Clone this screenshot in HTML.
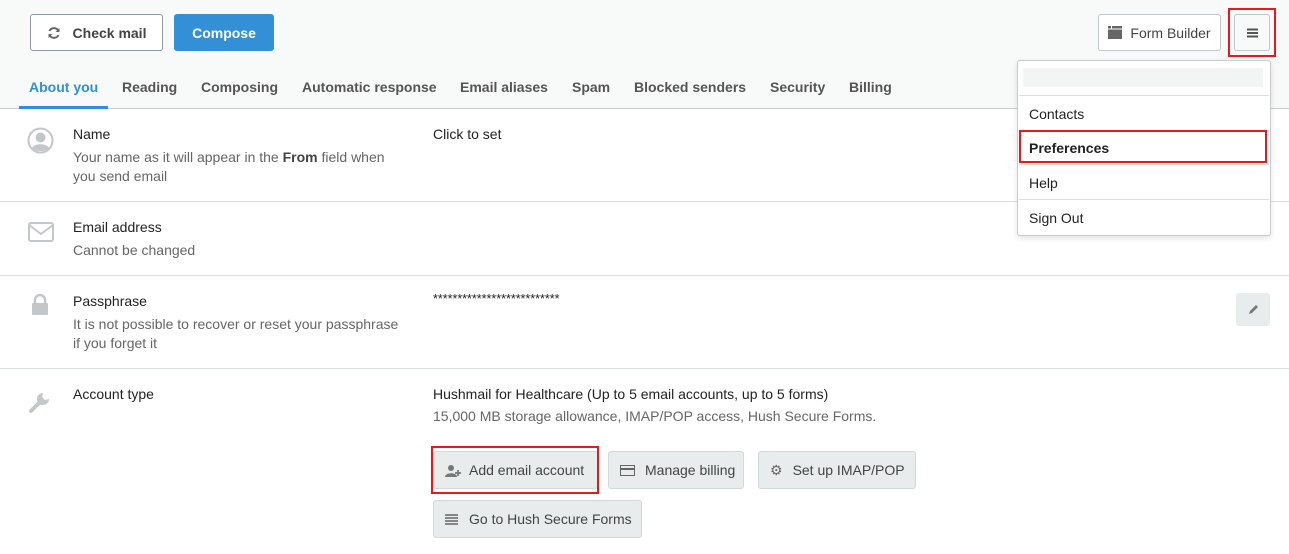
<!DOCTYPE html><html><head><style>
body{margin:0;width:1289px;height:554px;overflow:hidden;background:#fff;font-family:"Liberation Sans",sans-serif;position:relative;color:#222}
.a{position:absolute}
.hdr{left:0;top:0;width:1289px;height:108px;background:#f8f9f9;border-bottom:1px solid #c8cccd}
.btn{position:absolute;box-sizing:border-box;border-radius:3px;font-size:14px;display:flex;align-items:center;justify-content:center}
.tab{position:absolute;top:79px;font-size:14px;font-weight:bold;color:#555}
.sep{position:absolute;left:0;width:1289px;height:1px;background:#dcdfe0}
.lab{position:absolute;left:73px;font-size:14px;color:#222}
.sub{position:absolute;left:73px;font-size:14px;color:#666;line-height:19px}
.gb{background:#e8eced;border:1px solid #d2d8d9;color:#444;justify-content:flex-start;padding-left:11px}
.red{position:absolute;border:2px solid #e8191c;box-sizing:border-box}
.mi{position:absolute;left:1029px;font-size:14px;color:#222}
.ms{position:absolute;left:1019px;width:250px;height:1px;background:#dcdfe0}
</style></head><body>
<div class="a hdr"></div>
<div class="btn" style="left:30px;top:14px;width:133px;height:37px;border:1px solid #8a9a9d;background:#fff;font-weight:bold;color:#444"><svg width="14" height="14" viewBox="0 0 14 14" style="margin-right:12px"><path d="M11.5 5A5 5 0 0 0 2.5 5M2.5 9A5 5 0 0 0 11.5 9" fill="none" stroke="#666" stroke-width="2"/><path d="M12.5 2v4h-4zM1.5 12V8h4z" fill="#666"/></svg>Check mail</div>
<div class="btn" style="left:174px;top:14px;width:100px;height:37px;background:#3390d6;color:#fff;font-weight:bold">Compose</div>
<div class="btn" style="left:1098px;top:14px;width:123px;height:37px;border:1px solid #c2c8c9;background:#fff;color:#444"><svg width="14" height="13" style="margin-right:8px"><rect x="0" y="0" width="14" height="13" fill="#666"/><rect x="0" y="2.5" width="14" height="1" fill="#fff"/><rect x="3" y="0" width="1" height="2.5" fill="#fff"/></svg>Form Builder</div>
<div class="btn" style="left:1234px;top:14px;width:36px;height:37px;border:1px solid #c2c8c9;background:#f8f9f9"><svg width="11" height="10"><path d="M0 1.5h11M0 5h11M0 8.5h11" stroke="#555" stroke-width="2"/></svg></div>
<div class="red" style="left:1228px;top:8px;width:48px;height:49px"></div>
<div class="tab" style="left:29px;color:#2f8fd8">About you</div>
<div class="a" style="left:19px;top:106px;width:89px;height:3px;background:#2f8fd8"></div>
<div class="tab" style="left:122px">Reading</div>
<div class="tab" style="left:201px">Composing</div>
<div class="tab" style="left:302px">Automatic response</div>
<div class="tab" style="left:460px">Email aliases</div>
<div class="tab" style="left:572px">Spam</div>
<div class="tab" style="left:634px">Blocked senders</div>
<div class="tab" style="left:770px">Security</div>
<div class="tab" style="left:849px">Billing</div>

<svg class="a" style="left:27px;top:127px" width="27" height="27" viewBox="0 0 27 27"><circle cx="13.5" cy="13.5" r="12" fill="#fff" stroke="#c3c7c9" stroke-width="2"/><circle cx="13.5" cy="10.5" r="5" fill="#c3c7c9"/><path d="M5 21c2-5 15-5 17 0c-4 4-13 4-17 0z" fill="#c3c7c9"/></svg>
<div class="lab" style="top:126px">Name</div>
<div class="sub" style="top:148px">Your name as it will appear in the <b style="color:#444">From</b> field when<br>you send email</div>
<div class="a" style="left:433px;top:126px;font-size:14px">Click to set</div>
<div class="sep" style="top:201px"></div>

<svg class="a" style="left:28px;top:222px" width="26" height="20"><rect x="1" y="1" width="24" height="18" rx="2" fill="none" stroke="#c3c7c9" stroke-width="2"/><path d="M1 3l12 9 12-9" fill="none" stroke="#c3c7c9" stroke-width="2"/></svg>
<div class="lab" style="top:219px">Email address</div>
<div class="sub" style="top:241px">Cannot be changed</div>
<div class="sep" style="top:275px"></div>

<svg class="a" style="left:31px;top:294px" width="18" height="21"><path d="M4 9V6a5 5 0 0 1 10 0v3" fill="none" stroke="#c3c7c9" stroke-width="2.5"/><rect x="1" y="9" width="16" height="12" rx="1" fill="#c3c7c9"/></svg>
<div class="lab" style="top:293px">Passphrase</div>
<div class="sub" style="top:315px">It is not possible to recover or reset your passphrase<br>if you forget it</div>
<div class="a" style="left:433px;top:292px;font-size:12.5px">**************************</div>
<div class="btn" style="left:1236px;top:293px;width:34px;height:33px;background:#e8eced"><svg width="12" height="12"><path d="M2 10l1-3 6-6 2 2-6 6z" fill="#777"/></svg></div>
<div class="sep" style="top:368px"></div>

<svg class="a" style="left:28px;top:390px" width="24" height="24"><path d="M3 21l10-10" stroke="#c3c7c9" stroke-width="4" stroke-linecap="round"/><path d="M15 3a6 6 0 1 0 6 6l-4 1-3-3z" fill="#c3c7c9"/></svg>
<div class="lab" style="top:386px">Account type</div>
<div class="a" style="left:433px;top:386px;font-size:14px">Hushmail for Healthcare (Up to 5 email accounts, up to 5 forms)</div>
<div class="a" style="left:433px;top:408px;font-size:14px;color:#666">15,000 MB storage allowance, IMAP/POP access, Hush Secure Forms.</div>

<div class="btn gb" style="left:433px;top:451px;width:165px;height:38px"><svg width="16" height="13" style="margin-right:8px"><circle cx="6" cy="4" r="3" fill="#777"/><path d="M0 13c0-5 12-5 12 0z" fill="#777"/><path d="M10 9h6M13 6v6" stroke="#777" stroke-width="1.8"/></svg>Add email account</div>
<div class="red" style="left:431px;top:446px;width:168px;height:48px"></div>
<div class="btn gb" style="left:608px;top:451px;width:136px;height:38px"><svg width="15" height="11" style="margin-right:10px"><rect x=".5" y=".5" width="14" height="10" fill="none" stroke="#666"/><rect x="0" y="3" width="15" height="2" fill="#666"/></svg>Manage billing</div>
<div class="btn gb" style="left:758px;top:451px;width:158px;height:38px"><span style="color:#666;margin-right:10px;font-size:14px">⚙</span>Set up IMAP/POP</div>
<div class="btn gb" style="left:433px;top:500px;width:209px;height:38px"><svg width="13" height="11" style="margin-right:11px"><path d="M0 1h13M0 4h13M0 7h13M0 10h13" stroke="#666" stroke-width="1.5"/></svg>Go to Hush Secure Forms</div>

<div class="a" style="left:1017px;top:60px;width:252px;height:174px;background:#fff;border:1px solid #c8cccd;border-radius:3px;box-shadow:0 2px 6px rgba(0,0,0,.12)"></div>
<div class="a" style="left:1023px;top:68px;width:240px;height:19px;background:#f3f5f5"></div>
<div class="ms" style="top:95px"></div>
<div class="mi" style="top:106px">Contacts</div>
<div class="ms" style="top:130px"></div>
<div class="mi" style="top:140px;font-weight:bold">Preferences</div>
<div class="red" style="left:1019px;top:130px;width:248px;height:33px"></div>
<div class="ms" style="top:164px"></div>
<div class="mi" style="top:175px">Help</div>
<div class="ms" style="top:199px"></div>
<div class="mi" style="top:210px">Sign Out</div>
</body></html>
